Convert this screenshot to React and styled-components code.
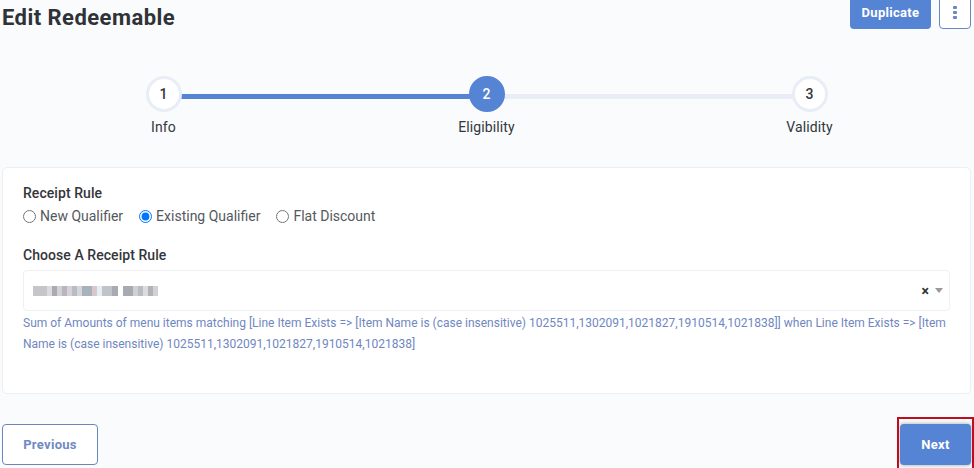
import React from 'react'
import styled, { createGlobalStyle } from 'styled-components'

const Global = createGlobalStyle`
  html, body {
    margin: 0;
    height: 468px;
    overflow: hidden;
    background: #f9fbfd;
    font-family: Roboto, "Liberation Sans", sans-serif;
  }
`

const steps = [
  { n: 1, label: 'Info' },
  { n: 2, label: 'Eligibility', active: true },
  { n: 3, label: 'Validity' },
]

// pixelated bits of the blurred-out rule name
const mosaicLong = 'linear-gradient(90deg, #c6c6ca 0 14px, #dcdcde 14px 19px, #a9abb2 19px 24px, #d2d2d6 24px 29px, #b9b4bd 29px 34px, #d4d4d8 34px 39px, #b8bcc4 39px 44px, #d6d6da 44px 49px, #a8b2bd 49px 59px, #d8c8c8 59px 64px, #e6eef4 64px 69px, #bfc4ca 69px 79px, #a9abb2 79px 85px)'
const mosaicShort = 'linear-gradient(90deg, #a9a9b2 0 10px, #d0d0d4 10px 15px, #b9bcc0 15px 20px, #dcdcde 20px 25px, #b0b4b8 25px 30px, #d2d2d6 30px 35px)'

export default function App() {
  return (
    <Page>
      <Global />
      <Header>
        <Title>Edit Redeemable</Title>
        <Actions>
          <PrimaryBtn $width="81px" $height="33px">Duplicate</PrimaryBtn>
          <KebabBtn aria-label="More">
            <Dot /><Dot /><Dot />
          </KebabBtn>
        </Actions>
      </Header>

      <Stepper>
        {steps.map((s, i) => (
          <Step key={s.n}>
            {i < 2 && <Connector $done={i === 0} />}
            <Circle $active={s.active}>{s.n}</Circle>
            <StepLabel>{s.label}</StepLabel>
          </Step>
        ))}
      </Stepper>

      <Card>
        <FieldLabel>Receipt Rule</FieldLabel>
        <RadioRow>
          <RadioItem><input type="radio" name="rule" />New Qualifier</RadioItem>
          <RadioItem><input type="radio" name="rule" defaultChecked />Existing Qualifier</RadioItem>
          <RadioItem><input type="radio" name="rule" />Flat Discount</RadioItem>
        </RadioRow>
        <SelectLabel>Choose A Receipt Rule</SelectLabel>
        <Select>
          <Redacted $width="85px" $mosaic={mosaicLong} />
          <Redacted $width="35px" $mosaic={mosaicShort} />
          <Clear>×</Clear>
          <Caret />
        </Select>
        <Help>
          Sum of Amounts of menu items matching [Line Item Exists =&gt; [Item Name is (case insensitive) 1025511,1302091,1021827,1910514,1021838]] when Line Item Exists =&gt; [Item Name is (case insensitive) 1025511,1302091,1021827,1910514,1021838]
        </Help>
      </Card>

      <Footer>
        <SecondaryBtn>Previous</SecondaryBtn>
        <Highlighted>
          <PrimaryBtn $width="71px" $height="41px" $glow>Next</PrimaryBtn>
        </Highlighted>
      </Footer>
    </Page>
  )
}

const Page = styled.div`
  margin-top: -12px;
  padding: 0 3px 0 2px;
  color: #2f3237;
`

const Header = styled.div`
  display: flex;
  justify-content: space-between;
  align-items: flex-start;
`

const Title = styled.h1`
  margin: 16px 0 0;
  font-size: 22px;
  line-height: 28px;
  font-weight: 700;
  letter-spacing: 0.45px;
`

const Actions = styled.div`
  display: flex;
  gap: 8px;
  margin-top: 8px;
`

const PrimaryBtn = styled.button`
  width: ${p => p.$width};
  height: ${p => p.$height};
  padding: 0;
  border: none;
  border-radius: 4px;
  background: #5584d4;
  color: #fff;
  font: 700 13px Roboto, sans-serif;
  letter-spacing: 0.3px;
  cursor: pointer;
  box-shadow: ${p => (p.$glow ? '0 0 4px rgba(0, 0, 0, 0.35)' : 'none')};
`

const KebabBtn = styled.button`
  width: 32px;
  height: 33px;
  padding: 0;
  border: 1px solid #6c86bd;
  border-radius: 4px;
  background: #fff;
  display: flex;
  flex-direction: column;
  align-items: center;
  justify-content: center;
  gap: 2px;
`

const Dot = styled.span`
  width: 4px;
  height: 3px;
  background: #6c86c4;
  border-radius: 1px;
`

const Stepper = styled.div`
  display: flex;
  margin: 44px 0 0;
`

const Step = styled.div`
  position: relative;
  flex: 1;
  display: flex;
  flex-direction: column;
  align-items: center;
  gap: 5px;
`

const Connector = styled.div`
  position: absolute;
  top: 18px;
  left: 50%;
  width: 100%;
  height: 5px;
  background: ${p => (p.$done ? '#5584d4' : '#e8edf6')};
`

const Circle = styled.div`
  position: relative;
  z-index: 1;
  box-sizing: border-box;
  width: 36px;
  height: 36px;
  border-radius: 50%;
  display: flex;
  align-items: center;
  justify-content: center;
  font-size: 14px;
  font-weight: 500;
  background: ${p => (p.$active ? '#5584d4' : '#fff')};
  color: ${p => (p.$active ? '#fff' : '#33363b')};
  border: 3px solid ${p => (p.$active ? '#5584d4' : '#e8edf6')};
`

const StepLabel = styled.div`
  font-size: 14px;
  line-height: 20px;
  color: #33363b;
  letter-spacing: 0.1px;
`

const Card = styled.div`
  box-sizing: border-box;
  height: 227px;
  margin-top: 30px;
  padding: 16px 20px 0;
  background: #fff;
  border: 1px solid #eceef1;
  border-radius: 5px;
`

const FieldLabel = styled.div`
  font-size: 14px;
  line-height: 18px;
  font-weight: 500;
  letter-spacing: 0.06px;
  color: #33363b;
`

const SelectLabel = styled(FieldLabel)`
  margin-top: 21px;
`

const RadioRow = styled.div`
  display: flex;
  gap: 16px;
  margin-top: 5px;
`

const RadioItem = styled.label`
  display: flex;
  align-items: center;
  gap: 4px;
  font-size: 14px;
  line-height: 18px;
  color: #55585d;

  input {
    margin: 0;
  }
`

const Select = styled.div`
  box-sizing: border-box;
  height: 41px;
  margin-top: 6px;
  padding: 0 6px 0 9px;
  display: flex;
  align-items: center;
  gap: 5px;
  border: 1px solid #eef0f3;
  border-radius: 4px;
`

const Redacted = styled.span`
  width: ${p => p.$width};
  height: 10px;
  background: ${p => p.$mosaic};
  filter: blur(0.6px);
`

const Clear = styled.span`
  margin-left: auto;
  font-size: 14px;
  font-weight: 700;
  color: #333;
`

const Caret = styled.span`
  margin-left: 1px;
  border-left: 4px solid transparent;
  border-right: 4px solid transparent;
  border-top: 5px solid #999;
`

const Help = styled.div`
  margin-top: 2px;
  font-size: 12px;
  line-height: 21px;
  color: #6f87bf;
`

const Footer = styled.div`
  display: flex;
  justify-content: space-between;
  margin-top: 30px;
`

const SecondaryBtn = styled.button`
  width: 96px;
  height: 41px;
  padding: 0;
  border: 1px solid #6c86bd;
  border-radius: 4px;
  background: #fff;
  color: #7189c4;
  font: 700 13px Roboto, sans-serif;
  letter-spacing: 0.3px;
`

const Highlighted = styled.div`
  position: relative;
  display: flex;

  &::after {
    content: '';
    position: absolute;
    top: -7px;
    left: -3px;
    right: -3px;
    bottom: -8px;
    border: 2px solid #c00d1e;
    pointer-events: none;
  }
`
